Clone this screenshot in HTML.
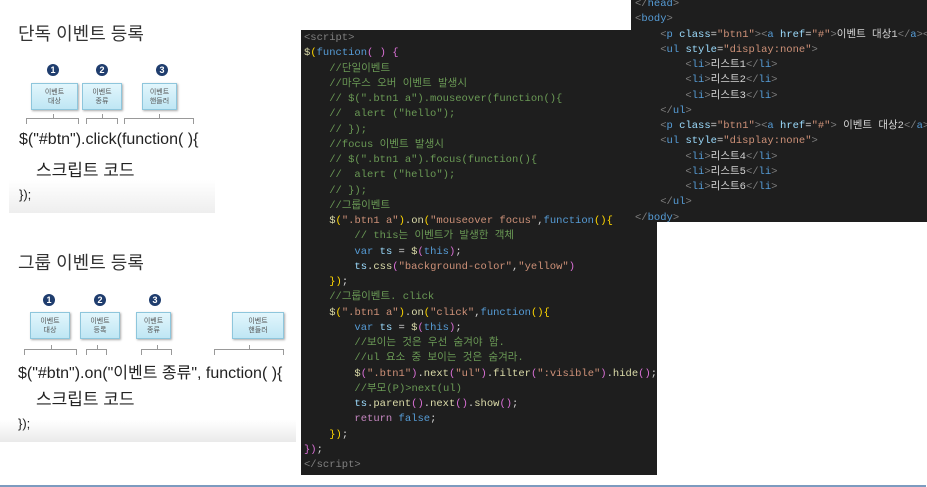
<!DOCTYPE html>
<html><head><meta charset="utf-8"><style>
*{margin:0;padding:0;box-sizing:border-box}
body{width:927px;height:487px;background:#fff;position:relative;overflow:hidden;font-family:"Liberation Sans","Noto Sans CJK KR",sans-serif}
.a{position:absolute}
.t{font-size:18px;color:#333;white-space:nowrap}
.box{position:absolute;background:linear-gradient(#e2f6fc,#bfe6f4);border:1px solid #8ec6dc;box-shadow:1px 1px 2px #aaa;font-size:7px;color:#555;text-align:center;line-height:9px;padding-top:4px}
.c{position:absolute;width:12px;height:12px;border-radius:50%;background:#1f3d6e;color:#fff;font-size:9px;font-weight:bold;text-align:center;line-height:12px}
.br{position:absolute;height:6px;border:1px solid #999;border-bottom:none}
.br:after{content:"";position:absolute;left:50%;top:-5px;height:5px;border-left:1px solid #999}
.code{position:absolute;background:#1e1e1e;font-family:"Liberation Mono","Noto Sans CJK KR",monospace;font-size:10.5px;line-height:15.25px;white-space:pre;color:#d4d4d4;overflow:hidden}
.g{color:#6a9955}.k{color:#569cd6}.s{color:#ce9178}.f{color:#dcdcaa}.v{color:#9cdcfe}.p{color:#808080}.y{color:#ffd700}.m{color:#da70d6}.r{color:#c586c0}
</style></head><body>
<div class="a t" style="left:18px;top:20px">단독 이벤트 등록</div>
<div class="c" style="left:47px;top:64px">1</div>
<div class="c" style="left:96px;top:64px">2</div>
<div class="c" style="left:156px;top:64px">3</div>
<div class="box" style="left:31px;top:83px;width:47px;height:27px">이벤트<br>대상</div>
<div class="box" style="left:82px;top:83px;width:40px;height:27px">이벤트<br>종류</div>
<div class="box" style="left:142px;top:83px;width:35px;height:27px">이벤트<br>핸들러</div>
<div class="br" style="left:26px;top:118px;width:53px"></div>
<div class="br" style="left:86px;top:118px;width:32px"></div>
<div class="br" style="left:124px;top:118px;width:70px"></div>
<div class="a" style="left:9px;top:180px;width:206px;height:33px;background:linear-gradient(#fff,#eee)"></div>
<div class="a t" style="left:19px;top:131px;font-size:16px;color:#222">$("#btn").click(function( ){</div>
<div class="a t" style="left:36px;top:156px;font-size:17px;color:#222">스크립트 코드</div>
<div class="a t" style="left:19px;top:187px;font-size:13px;color:#222">});</div>

<div class="a t" style="left:18px;top:249px">그룹 이벤트 등록</div>
<div class="c" style="left:43px;top:294px">1</div>
<div class="c" style="left:94px;top:294px">2</div>
<div class="c" style="left:149px;top:294px">3</div>
<div class="box" style="left:30px;top:312px;width:40px;height:27px">이벤트<br>대상</div>
<div class="box" style="left:80px;top:312px;width:40px;height:27px">이벤트<br>등록</div>
<div class="box" style="left:136px;top:312px;width:35px;height:27px">이벤트<br>종류</div>
<div class="box" style="left:232px;top:312px;width:52px;height:27px">이벤트<br>핸들러</div>
<div class="br" style="left:24px;top:349px;width:53px"></div>
<div class="br" style="left:86px;top:349px;width:21px"></div>
<div class="br" style="left:141px;top:349px;width:31px"></div>
<div class="br" style="left:214px;top:349px;width:70px"></div>
<div class="a" style="left:0;top:420px;width:296px;height:22px;background:linear-gradient(#fff,#eaeaea)"></div>
<div class="a t" style="left:18px;top:359px;font-size:16px;color:#222">$("#btn").on("이벤트 종류", function( ){</div>
<div class="a t" style="left:36px;top:385px;font-size:17px;color:#222">스크립트 코드</div>
<div class="a t" style="left:18px;top:416px;font-size:13px;color:#222">});</div>

<div class="code" style="left:301px;top:30px;width:356px;height:445px;padding:1px 0 0 3px"><span class="p">&lt;script&gt;</span>
<span class="f">$</span><span class="y">(</span><span class="k">function</span><span class="m">( ) {</span>
    <span class="g">//단일이벤트</span>
    <span class="g">//마우스 오버 이벤트 발생시</span>
    <span class="g">// $(".btn1 a").mouseover(function(){</span>
    <span class="g">//  alert ("hello");</span>
    <span class="g">// });</span>
    <span class="g">//focus 이벤트 발생시</span>
    <span class="g">// $(".btn1 a").focus(function(){</span>
    <span class="g">//  alert ("hello");</span>
    <span class="g">// });</span>
    <span class="g">//그룹이벤트</span>
    <span class="f">$</span><span class="y">(</span><span class="s">".btn1 a"</span><span class="y">)</span>.<span class="f">on</span><span class="y">(</span><span class="s">"mouseover focus"</span>,<span class="k">function</span><span class="y">(){</span>
        <span class="g">// this는 이벤트가 발생한 객체</span>
        <span class="k">var</span> <span class="v">ts</span> = <span class="f">$</span><span class="m">(</span><span class="k">this</span><span class="m">)</span>;
        <span class="v">ts</span>.<span class="f">css</span><span class="m">(</span><span class="s">"background-color"</span>,<span class="s">"yellow"</span><span class="m">)</span>
    <span class="y">})</span>;
    <span class="g">//그룹이벤트. click</span>
    <span class="f">$</span><span class="y">(</span><span class="s">".btn1 a"</span><span class="y">)</span>.<span class="f">on</span><span class="y">(</span><span class="s">"click"</span>,<span class="k">function</span><span class="y">(){</span>
        <span class="k">var</span> <span class="v">ts</span> = <span class="f">$</span><span class="m">(</span><span class="k">this</span><span class="m">)</span>;
        <span class="g">//보이는 것은 우선 숨겨야 함.</span>
        <span class="g">//ul 요소 중 보이는 것은 숨겨라.</span>
        <span class="f">$</span><span class="m">(</span><span class="s">".btn1"</span><span class="m">)</span>.<span class="f">next</span><span class="m">(</span><span class="s">"ul"</span><span class="m">)</span>.<span class="f">filter</span><span class="m">(</span><span class="s">":visible"</span><span class="m">)</span>.<span class="f">hide</span><span class="m">()</span>;
        <span class="g">//부모(P)&gt;next(ul)</span>
        <span class="v">ts</span>.<span class="f">parent</span><span class="m">()</span>.<span class="f">next</span><span class="m">()</span>.<span class="f">show</span><span class="m">()</span>;
        <span class="r">return</span> <span class="k">false</span>;
    <span class="y">})</span>;
<span class="m">})</span>;
<span class="p">&lt;/script&gt;</span></div>

<div class="code" style="left:631px;top:0px;width:296px;height:222px;padding:0 0 0 4px;line-height:15.25px"><div style="margin-top:-3px"><span class="p">&lt;/</span><span class="k">head</span><span class="p">&gt;</span>
<span class="p">&lt;</span><span class="k">body</span><span class="p">&gt;</span>
    <span class="p">&lt;</span><span class="k">p</span> <span class="v">class</span>=<span class="s">"btn1"</span><span class="p">&gt;&lt;</span><span class="k">a</span> <span class="v">href</span>=<span class="s">"#"</span><span class="p">&gt;</span>이벤트 대상1<span class="p">&lt;/</span><span class="k">a</span><span class="p">&gt;&lt;</span>
    <span class="p">&lt;</span><span class="k">ul</span> <span class="v">style</span>=<span class="s">"display:none"</span><span class="p">&gt;</span>
        <span class="p">&lt;</span><span class="k">li</span><span class="p">&gt;</span>리스트1<span class="p">&lt;/</span><span class="k">li</span><span class="p">&gt;</span>
        <span class="p">&lt;</span><span class="k">li</span><span class="p">&gt;</span>리스트2<span class="p">&lt;/</span><span class="k">li</span><span class="p">&gt;</span>
        <span class="p">&lt;</span><span class="k">li</span><span class="p">&gt;</span>리스트3<span class="p">&lt;/</span><span class="k">li</span><span class="p">&gt;</span>
    <span class="p">&lt;/</span><span class="k">ul</span><span class="p">&gt;</span>
    <span class="p">&lt;</span><span class="k">p</span> <span class="v">class</span>=<span class="s">"btn1"</span><span class="p">&gt;&lt;</span><span class="k">a</span> <span class="v">href</span>=<span class="s">"#"</span><span class="p">&gt;</span> 이벤트 대상2<span class="p">&lt;/</span><span class="k">a</span><span class="p">&gt;</span>
    <span class="p">&lt;</span><span class="k">ul</span> <span class="v">style</span>=<span class="s">"display:none"</span><span class="p">&gt;</span>
        <span class="p">&lt;</span><span class="k">li</span><span class="p">&gt;</span>리스트4<span class="p">&lt;/</span><span class="k">li</span><span class="p">&gt;</span>
        <span class="p">&lt;</span><span class="k">li</span><span class="p">&gt;</span>리스트5<span class="p">&lt;/</span><span class="k">li</span><span class="p">&gt;</span>
        <span class="p">&lt;</span><span class="k">li</span><span class="p">&gt;</span>리스트6<span class="p">&lt;/</span><span class="k">li</span><span class="p">&gt;</span>
    <span class="p">&lt;/</span><span class="k">ul</span><span class="p">&gt;</span>
<span class="p">&lt;/</span><span class="k">body</span><span class="p">&gt;</span></div></div>

<div class="a" style="left:0;top:485px;width:926px;height:2px;background:#7d9bbf"></div>
</body></html>
